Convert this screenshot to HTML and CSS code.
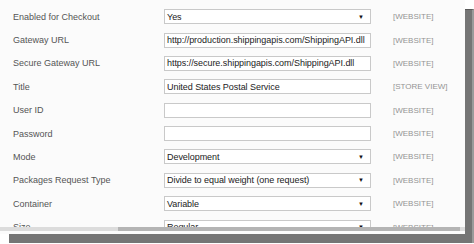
FILE: index.html
```html
<!DOCTYPE html>
<html lang="en">
<head>
    <meta charset="UTF-8">
    <meta name="viewport" content="width=device-width, initial-scale=1.0">
    <title>USPS shipping config</title>
    <link rel="stylesheet" href="styles.css">
</head>
<body>
    <div class="palco">
        <div class="sombra"></div>
        <div class="janela">
            <div class="conteudo">
                <div class="linha">
                    <span class="rotulo">Enabled for Checkout</span>
                    <div class="campo select">Yes<span class="seta">&#9660;</span></div>
                    <span class="escopo">[WEBSITE]</span>
                </div>
                <div class="linha">
                    <span class="rotulo">Gateway URL</span>
                    <input class="campo" type="text" value="http://production.shippingapis.com/ShippingAPI.dll">
                    <span class="escopo">[WEBSITE]</span>
                </div>
                <div class="linha">
                    <span class="rotulo">Secure Gateway URL</span>
                    <input class="campo" type="text" value="https://secure.shippingapis.com/ShippingAPI.dll">
                    <span class="escopo">[WEBSITE]</span>
                </div>
                <div class="linha">
                    <span class="rotulo">Title</span>
                    <input class="campo" type="text" value="United States Postal Service">
                    <span class="escopo">[STORE VIEW]</span>
                </div>
                <div class="linha">
                    <span class="rotulo">User ID</span>
                    <input class="campo" type="text" value="">
                    <span class="escopo">[WEBSITE]</span>
                </div>
                <div class="linha">
                    <span class="rotulo">Password</span>
                    <input class="campo" type="password" value="">
                    <span class="escopo">[WEBSITE]</span>
                </div>
                <div class="linha">
                    <span class="rotulo">Mode</span>
                    <div class="campo select">Development<span class="seta">&#9660;</span></div>
                    <span class="escopo">[WEBSITE]</span>
                </div>
                <div class="linha">
                    <span class="rotulo">Packages Request Type</span>
                    <div class="campo select">Divide to equal weight (one request)<span class="seta">&#9660;</span></div>
                    <span class="escopo">[WEBSITE]</span>
                </div>
                <div class="linha">
                    <span class="rotulo">Container</span>
                    <div class="campo select">Variable<span class="seta">&#9660;</span></div>
                    <span class="escopo">[WEBSITE]</span>
                </div>
                <div class="linha">
                    <span class="rotulo">Size</span>
                    <div class="campo select">Regular<span class="seta">&#9660;</span></div>
                    <span class="escopo">[WEBSITE]</span>
                </div>
            </div>
            <div class="barra">
                <div class="polegar"></div>
            </div>
        </div>
    </div>
</body>
</html>
```
FILE: styles.css
```css
*{
    margin: 0px;
    padding: 0px;
    box-sizing: border-box;
}
body{
    background-color: #ffffff;
    font-family: 'Liberation Sans', Arial, sans-serif;
    font-size: 9px;
}
.palco{
    display: grid;
}
.sombra, .janela{
    grid-area: 1 / 1;
    width: 465px;
    height: 234px;
}
.sombra{
    margin: 9px 0px 0px 9px;
    background-color: #757575;
    border-top: 1px solid #5a5a5a;
    border-right: 2px solid #9a9a9a;
}
.janela{
    background-color: #fbfbfb;
    display: flex;
    flex-direction: column;
}
.conteudo{
    flex: 1;
    overflow: hidden;
    padding: 5px 0px 0px 13px;
}
.linha{
    height: 23.375px;
    display: grid;
    grid-template-columns: 151px 207px auto;
    align-items: center;
}
.rotulo{
    color: #555555;
}
.campo{
    height: 15px;
    border: 1px solid #c9c9c9;
    background-color: #ffffff;
    padding: 0px 1px 0px 2px;
    font-family: 'Liberation Sans', Arial, sans-serif;
    font-size: 9px;
    letter-spacing: -0.05px;
    color: #222222;
    outline: none;
}
.select{
    display: flex;
    align-items: center;
    justify-content: space-between;
    padding-right: 6px;
}
.seta{
    font-size: 6px;
    color: #111111;
}
.escopo{
    margin-left: 22px;
    color: #949494;
    font-size: 8px;
    white-space: nowrap;
}
.barra{
    height: 4px;
    margin-bottom: 3px;
    background-color: #dcdcdc;
    padding-left: 118px;
    padding-right: 5px;
}
.polegar{
    height: 100%;
    background-color: #b4b4b4;
}
```
